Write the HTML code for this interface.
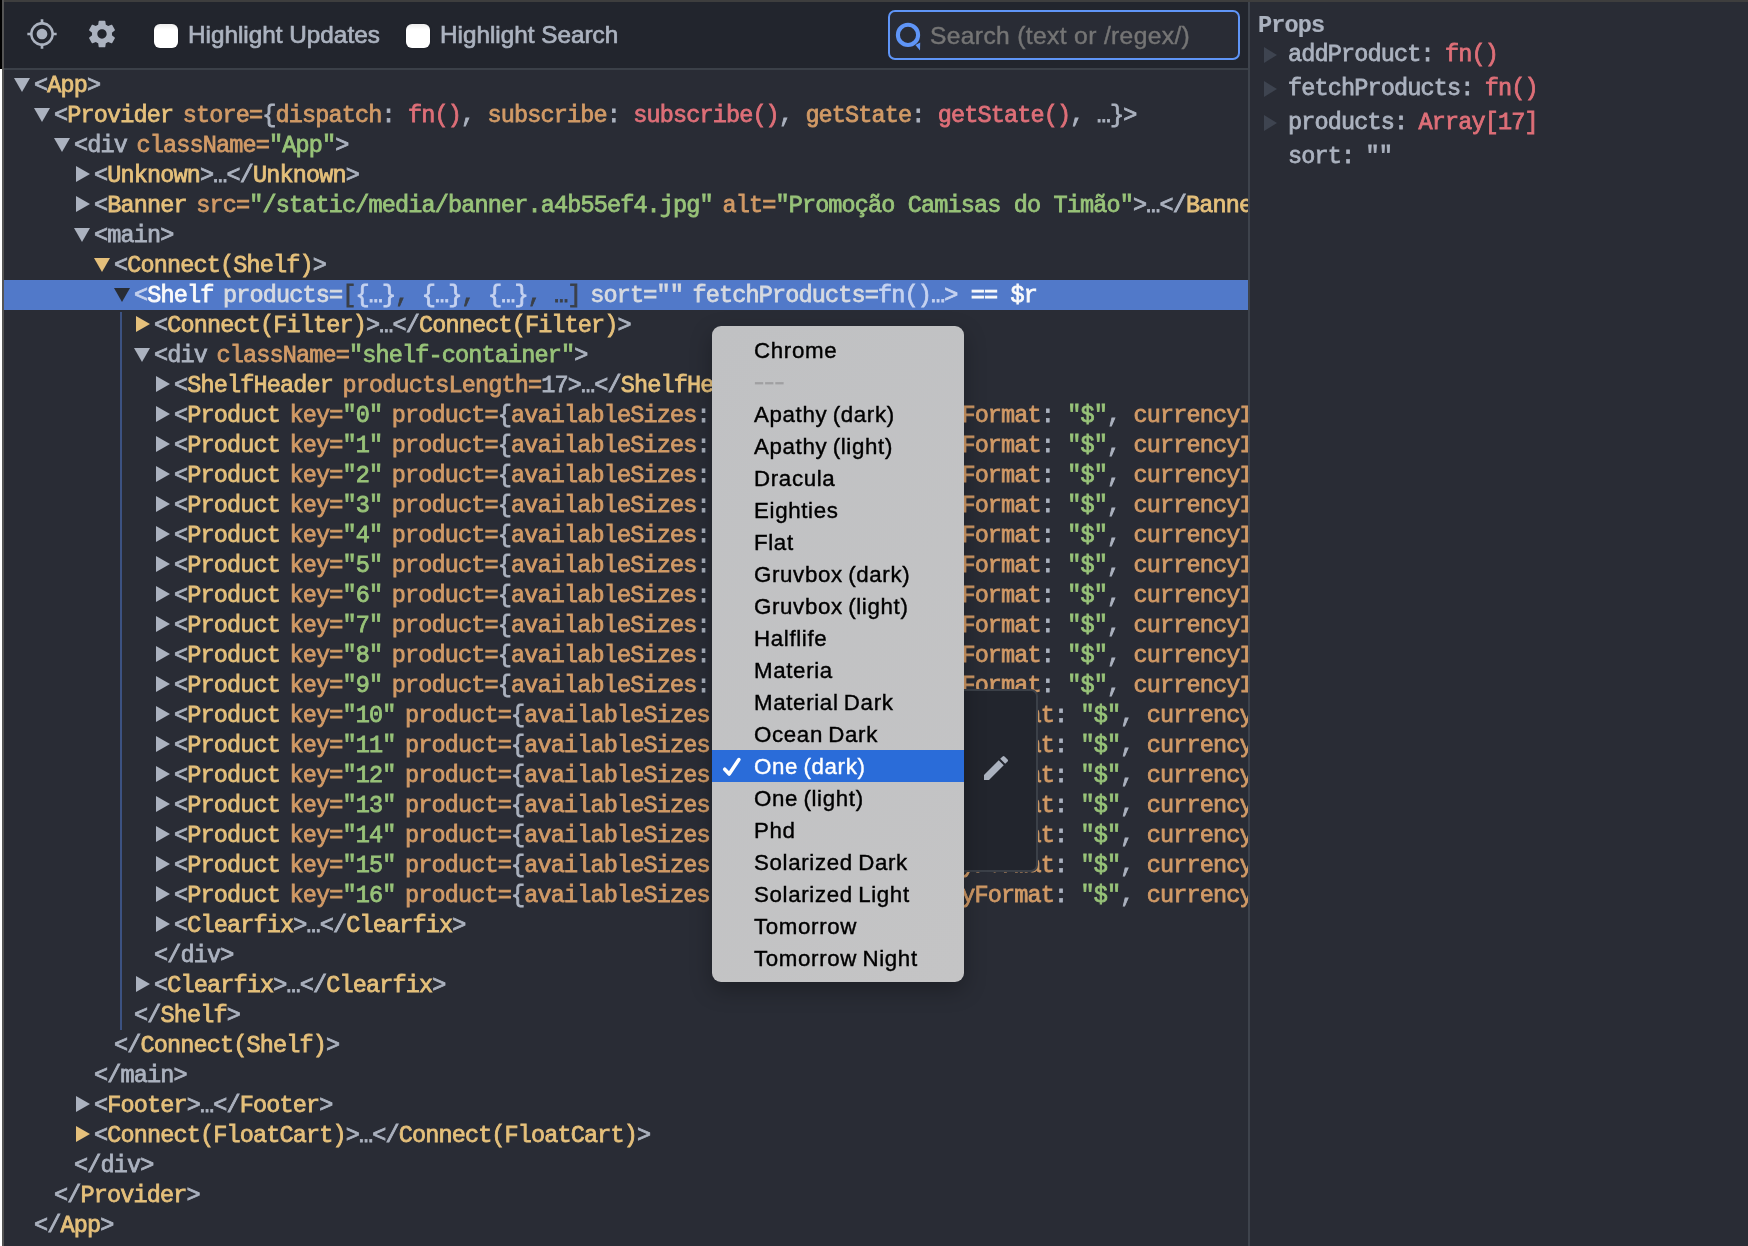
<!DOCTYPE html>
<html><head><meta charset="utf-8"><title>React DevTools</title>
<style>
*{box-sizing:border-box;margin:0;padding:0}
html,body{width:1748px;height:1246px;overflow:hidden;background:#292c35}
body{position:relative;font-family:"Liberation Mono",monospace;font-size:23.5px;letter-spacing:-0.857px;color:#abb2bf}
#lb{position:absolute;left:0;top:0;width:2px;height:69px;background:#000}
#lw{position:absolute;left:0;top:69px;width:2px;height:1177px;background:#fff}
#lg{position:absolute;left:2px;top:0;width:2px;height:1246px;background:#555}
#tg{position:absolute;left:4px;top:0;width:1744px;height:2px;background:#3e3e3e}
#tb{position:absolute;left:4px;top:2px;width:1244px;height:66px;background:#22252d}
#tbl{position:absolute;left:4px;top:68px;width:1244px;height:2px;background:#3b4048}
#vd{position:absolute;left:1248px;top:2px;width:2px;height:1244px;background:#3e434c}
#tree{position:absolute;left:0;top:0;width:1248px;height:1246px;overflow:hidden}
.row{position:absolute;left:4px;width:1244px;height:30px;line-height:31px;white-space:pre}
.row.sel{background:#5179c9}
.tx{position:absolute;top:0;margin-left:-4px;white-space:pre;-webkit-text-stroke:0.8px;will-change:transform}
.tx span{display:inline}
.b{color:#abb2bf}.n{color:#e5c07b}.h{color:#abb2bf}.a{color:#d19a66}.s{color:#98c379}.f{color:#de6f78}
.sp{letter-spacing:-4.557px}
.sb{color:#c3d0ee}.sn{color:#fafafa}.sa{color:#d7dae0}.sd{color:#3b4048}.sv{color:#c5d2f0}
.ar{position:absolute;margin-left:-4px;width:0;height:0;border-style:solid}
.ar.d{top:8px;border-width:14px 8px 0 8px;border-color:#abb2bf transparent transparent transparent}
.ar.r{top:6px;margin-left:-2px;border-width:8px 0 8px 14px;border-color:transparent transparent transparent #abb2bf}
.ar.d.y{border-top-color:#e5c07b}.ar.r.y{border-left-color:#e5c07b}
.ar.d.k{border-top-color:#282c34}
#guide{position:absolute;left:120px;top:312px;width:2px;height:718px;background:#3c5282}
.tbt{position:absolute;top:19.8px;letter-spacing:0;will-change:transform;-webkit-text-stroke:0.7px;font-family:"Liberation Sans",sans-serif;font-size:24.3px;line-height:30px;color:#abb2bf;white-space:pre}
.cb{position:absolute;top:24px;width:24px;height:24px;border-radius:6px;background:linear-gradient(#ececec,#fff 22%);box-shadow:0 0 2px 0 rgba(14,16,24,.4);filter:blur(0.5px)}
#search{position:absolute;left:888px;top:10px;width:352px;height:50px;border:2px solid #5f95f7;border-radius:7px;background:#292c35}
#search span{letter-spacing:0.36px;will-change:transform;-webkit-text-stroke:0.45px;position:absolute;left:40px;top:8.6px;font-family:"Liberation Sans",sans-serif;font-size:24.6px;line-height:30px;color:#757575;white-space:pre}
#panel{position:absolute;left:940px;top:689px;width:98px;height:183px;border:2px solid #3b4048;border-radius:7px;background:#22252d}
#menu{position:absolute;left:712px;top:326px;width:252px;height:656px;border-radius:9px;background:linear-gradient(135deg,#c0c1c3,#c4c4c5);box-shadow:0 8px 22px rgba(0,0,0,.28)}
.mi{letter-spacing:0.65px;word-spacing:-1.5px;-webkit-text-stroke:0.4px;position:absolute;left:712px;width:252px;height:32px;line-height:34px;padding-left:42px;font-family:"Liberation Sans",sans-serif;font-size:22.3px;color:#000;white-space:pre}
.mi.dis{color:#a3a3a3;letter-spacing:3px}
.mi.on{background:#2a6cd9;color:#fff}
#props{position:absolute;left:1250px;top:2px;width:498px;height:1244px;background:#292c35}
.ph{position:absolute;left:1258px;top:10.8px;line-height:30px;font-weight:bold;color:#abb2bf;will-change:transform;-webkit-text-stroke:0.2px}
.pr{position:absolute;left:1288px;line-height:30px;white-space:pre;will-change:transform;-webkit-text-stroke:0.8px}
.ps{letter-spacing:-2.757px}
.pa{position:absolute;left:1264px;width:0;height:0;border-style:solid;border-width:8px 0 8px 13px;border-color:transparent transparent transparent #3e4450}
</style></head><body>
<div id="tree">
<div class="row" style="top:70px"><i class="ar d g" style="left:14px"></i><span class="tx" style="left:34px"><span class="b">&lt;</span><span class="n">App</span><span class="b">&gt;</span></span></div>
<div class="row" style="top:100px"><i class="ar d g" style="left:34px"></i><span class="tx" style="left:54px"><span class="b">&lt;</span><span class="n">Provider</span><span class="sp"> </span><span class="a">store=</span><span class="b">{</span><span class="a">dispatch</span><span class="b">: </span><span class="f">fn()</span><span class="b">, </span><span class="a">subscribe</span><span class="b">: </span><span class="f">subscribe()</span><span class="b">, </span><span class="a">getState</span><span class="b">: </span><span class="f">getState()</span><span class="b">, …}&gt;</span></span></div>
<div class="row" style="top:130px"><i class="ar d g" style="left:54px"></i><span class="tx" style="left:74px"><span class="b">&lt;</span><span class="h">div</span><span class="sp"> </span><span class="a">className=</span><span class="s">"App"</span><span class="b">&gt;</span></span></div>
<div class="row" style="top:160px"><i class="ar r g" style="left:74px"></i><span class="tx" style="left:94px"><span class="b">&lt;</span><span class="n">Unknown</span><span class="b">&gt;…&lt;/</span><span class="n">Unknown</span><span class="b">&gt;</span></span></div>
<div class="row" style="top:190px"><i class="ar r g" style="left:74px"></i><span class="tx" style="left:94px"><span class="b">&lt;</span><span class="n">Banner</span><span class="sp"> </span><span class="a">src=</span><span class="s">"/static/media/banner.a4b55ef4.jpg"</span><span class="sp"> </span><span class="a">alt=</span><span class="s">"Promoção Camisas do Timão"</span><span class="b">&gt;…&lt;/</span><span class="n">Banner</span><span class="b">&gt;</span></span></div>
<div class="row" style="top:220px"><i class="ar d g" style="left:74px"></i><span class="tx" style="left:94px"><span class="b">&lt;</span><span class="h">main</span><span class="b">&gt;</span></span></div>
<div class="row" style="top:250px"><i class="ar d y" style="left:94px"></i><span class="tx" style="left:114px"><span class="b">&lt;</span><span class="n">Connect(Shelf)</span><span class="b">&gt;</span></span></div>
<div class="row sel" style="top:280px"><i class="ar d k" style="left:114px"></i><span class="tx" style="left:134px"><span class="sb">&lt;</span><span class="sn">Shelf</span><span class="sp"> </span><span class="sa">products=</span><span class="sd">[</span><span class="sv">{…}</span><span class="sd">, </span><span class="sv">{…}</span><span class="sd">, </span><span class="sv">{…}</span><span class="sd">, </span><span class="sd">…]</span><span class="sp"> </span><span class="sa">sort=""</span><span class="sp"> </span><span class="sa">fetchProducts=</span><span class="sv">fn()…&gt;</span><span class="sn"> == $r</span></span></div>
<div class="row" style="top:310px"><i class="ar r y" style="left:134px"></i><span class="tx" style="left:154px"><span class="b">&lt;</span><span class="n">Connect(Filter)</span><span class="b">&gt;…&lt;/</span><span class="n">Connect(Filter)</span><span class="b">&gt;</span></span></div>
<div class="row" style="top:340px"><i class="ar d g" style="left:134px"></i><span class="tx" style="left:154px"><span class="b">&lt;</span><span class="h">div</span><span class="sp"> </span><span class="a">className=</span><span class="s">"shelf-container"</span><span class="b">&gt;</span></span></div>
<div class="row" style="top:370px"><i class="ar r g" style="left:154px"></i><span class="tx" style="left:174px"><span class="b">&lt;</span><span class="n">ShelfHeader</span><span class="sp"> </span><span class="a">productsLength=</span><span class="b">17&gt;…&lt;/</span><span class="n">ShelfHeader</span><span class="b">&gt;</span></span></div>
<div class="row" style="top:400px"><i class="ar r g" style="left:154px"></i><span class="tx" style="left:174px"><span class="b">&lt;</span><span class="n">Product</span><span class="sp"> </span><span class="a">key=</span><span class="s">"0"</span><span class="sp"> </span><span class="a">product=</span><span class="b">{</span><span class="a">availableSizes</span><span class="b">: </span><span class="f">Array[2]</span><span class="b">, </span><span class="a">currencyFormat</span><span class="b">: </span><span class="s">"$"</span><span class="b">, </span><span class="a">currencyId</span><span class="b">: </span><span class="s">"BRL"</span><span class="b">, …}</span></span></div>
<div class="row" style="top:430px"><i class="ar r g" style="left:154px"></i><span class="tx" style="left:174px"><span class="b">&lt;</span><span class="n">Product</span><span class="sp"> </span><span class="a">key=</span><span class="s">"1"</span><span class="sp"> </span><span class="a">product=</span><span class="b">{</span><span class="a">availableSizes</span><span class="b">: </span><span class="f">Array[2]</span><span class="b">, </span><span class="a">currencyFormat</span><span class="b">: </span><span class="s">"$"</span><span class="b">, </span><span class="a">currencyId</span><span class="b">: </span><span class="s">"BRL"</span><span class="b">, …}</span></span></div>
<div class="row" style="top:460px"><i class="ar r g" style="left:154px"></i><span class="tx" style="left:174px"><span class="b">&lt;</span><span class="n">Product</span><span class="sp"> </span><span class="a">key=</span><span class="s">"2"</span><span class="sp"> </span><span class="a">product=</span><span class="b">{</span><span class="a">availableSizes</span><span class="b">: </span><span class="f">Array[2]</span><span class="b">, </span><span class="a">currencyFormat</span><span class="b">: </span><span class="s">"$"</span><span class="b">, </span><span class="a">currencyId</span><span class="b">: </span><span class="s">"BRL"</span><span class="b">, …}</span></span></div>
<div class="row" style="top:490px"><i class="ar r g" style="left:154px"></i><span class="tx" style="left:174px"><span class="b">&lt;</span><span class="n">Product</span><span class="sp"> </span><span class="a">key=</span><span class="s">"3"</span><span class="sp"> </span><span class="a">product=</span><span class="b">{</span><span class="a">availableSizes</span><span class="b">: </span><span class="f">Array[2]</span><span class="b">, </span><span class="a">currencyFormat</span><span class="b">: </span><span class="s">"$"</span><span class="b">, </span><span class="a">currencyId</span><span class="b">: </span><span class="s">"BRL"</span><span class="b">, …}</span></span></div>
<div class="row" style="top:520px"><i class="ar r g" style="left:154px"></i><span class="tx" style="left:174px"><span class="b">&lt;</span><span class="n">Product</span><span class="sp"> </span><span class="a">key=</span><span class="s">"4"</span><span class="sp"> </span><span class="a">product=</span><span class="b">{</span><span class="a">availableSizes</span><span class="b">: </span><span class="f">Array[2]</span><span class="b">, </span><span class="a">currencyFormat</span><span class="b">: </span><span class="s">"$"</span><span class="b">, </span><span class="a">currencyId</span><span class="b">: </span><span class="s">"BRL"</span><span class="b">, …}</span></span></div>
<div class="row" style="top:550px"><i class="ar r g" style="left:154px"></i><span class="tx" style="left:174px"><span class="b">&lt;</span><span class="n">Product</span><span class="sp"> </span><span class="a">key=</span><span class="s">"5"</span><span class="sp"> </span><span class="a">product=</span><span class="b">{</span><span class="a">availableSizes</span><span class="b">: </span><span class="f">Array[2]</span><span class="b">, </span><span class="a">currencyFormat</span><span class="b">: </span><span class="s">"$"</span><span class="b">, </span><span class="a">currencyId</span><span class="b">: </span><span class="s">"BRL"</span><span class="b">, …}</span></span></div>
<div class="row" style="top:580px"><i class="ar r g" style="left:154px"></i><span class="tx" style="left:174px"><span class="b">&lt;</span><span class="n">Product</span><span class="sp"> </span><span class="a">key=</span><span class="s">"6"</span><span class="sp"> </span><span class="a">product=</span><span class="b">{</span><span class="a">availableSizes</span><span class="b">: </span><span class="f">Array[2]</span><span class="b">, </span><span class="a">currencyFormat</span><span class="b">: </span><span class="s">"$"</span><span class="b">, </span><span class="a">currencyId</span><span class="b">: </span><span class="s">"BRL"</span><span class="b">, …}</span></span></div>
<div class="row" style="top:610px"><i class="ar r g" style="left:154px"></i><span class="tx" style="left:174px"><span class="b">&lt;</span><span class="n">Product</span><span class="sp"> </span><span class="a">key=</span><span class="s">"7"</span><span class="sp"> </span><span class="a">product=</span><span class="b">{</span><span class="a">availableSizes</span><span class="b">: </span><span class="f">Array[2]</span><span class="b">, </span><span class="a">currencyFormat</span><span class="b">: </span><span class="s">"$"</span><span class="b">, </span><span class="a">currencyId</span><span class="b">: </span><span class="s">"BRL"</span><span class="b">, …}</span></span></div>
<div class="row" style="top:640px"><i class="ar r g" style="left:154px"></i><span class="tx" style="left:174px"><span class="b">&lt;</span><span class="n">Product</span><span class="sp"> </span><span class="a">key=</span><span class="s">"8"</span><span class="sp"> </span><span class="a">product=</span><span class="b">{</span><span class="a">availableSizes</span><span class="b">: </span><span class="f">Array[2]</span><span class="b">, </span><span class="a">currencyFormat</span><span class="b">: </span><span class="s">"$"</span><span class="b">, </span><span class="a">currencyId</span><span class="b">: </span><span class="s">"BRL"</span><span class="b">, …}</span></span></div>
<div class="row" style="top:670px"><i class="ar r g" style="left:154px"></i><span class="tx" style="left:174px"><span class="b">&lt;</span><span class="n">Product</span><span class="sp"> </span><span class="a">key=</span><span class="s">"9"</span><span class="sp"> </span><span class="a">product=</span><span class="b">{</span><span class="a">availableSizes</span><span class="b">: </span><span class="f">Array[2]</span><span class="b">, </span><span class="a">currencyFormat</span><span class="b">: </span><span class="s">"$"</span><span class="b">, </span><span class="a">currencyId</span><span class="b">: </span><span class="s">"BRL"</span><span class="b">, …}</span></span></div>
<div class="row" style="top:700px"><i class="ar r g" style="left:154px"></i><span class="tx" style="left:174px"><span class="b">&lt;</span><span class="n">Product</span><span class="sp"> </span><span class="a">key=</span><span class="s">"10"</span><span class="sp"> </span><span class="a">product=</span><span class="b">{</span><span class="a">availableSizes</span><span class="b">: </span><span class="f">Array[2]</span><span class="b">, </span><span class="a">currencyFormat</span><span class="b">: </span><span class="s">"$"</span><span class="b">, </span><span class="a">currencyId</span><span class="b">: </span><span class="s">"BRL"</span><span class="b">, …}</span></span></div>
<div class="row" style="top:730px"><i class="ar r g" style="left:154px"></i><span class="tx" style="left:174px"><span class="b">&lt;</span><span class="n">Product</span><span class="sp"> </span><span class="a">key=</span><span class="s">"11"</span><span class="sp"> </span><span class="a">product=</span><span class="b">{</span><span class="a">availableSizes</span><span class="b">: </span><span class="f">Array[2]</span><span class="b">, </span><span class="a">currencyFormat</span><span class="b">: </span><span class="s">"$"</span><span class="b">, </span><span class="a">currencyId</span><span class="b">: </span><span class="s">"BRL"</span><span class="b">, …}</span></span></div>
<div class="row" style="top:760px"><i class="ar r g" style="left:154px"></i><span class="tx" style="left:174px"><span class="b">&lt;</span><span class="n">Product</span><span class="sp"> </span><span class="a">key=</span><span class="s">"12"</span><span class="sp"> </span><span class="a">product=</span><span class="b">{</span><span class="a">availableSizes</span><span class="b">: </span><span class="f">Array[2]</span><span class="b">, </span><span class="a">currencyFormat</span><span class="b">: </span><span class="s">"$"</span><span class="b">, </span><span class="a">currencyId</span><span class="b">: </span><span class="s">"BRL"</span><span class="b">, …}</span></span></div>
<div class="row" style="top:790px"><i class="ar r g" style="left:154px"></i><span class="tx" style="left:174px"><span class="b">&lt;</span><span class="n">Product</span><span class="sp"> </span><span class="a">key=</span><span class="s">"13"</span><span class="sp"> </span><span class="a">product=</span><span class="b">{</span><span class="a">availableSizes</span><span class="b">: </span><span class="f">Array[2]</span><span class="b">, </span><span class="a">currencyFormat</span><span class="b">: </span><span class="s">"$"</span><span class="b">, </span><span class="a">currencyId</span><span class="b">: </span><span class="s">"BRL"</span><span class="b">, …}</span></span></div>
<div class="row" style="top:820px"><i class="ar r g" style="left:154px"></i><span class="tx" style="left:174px"><span class="b">&lt;</span><span class="n">Product</span><span class="sp"> </span><span class="a">key=</span><span class="s">"14"</span><span class="sp"> </span><span class="a">product=</span><span class="b">{</span><span class="a">availableSizes</span><span class="b">: </span><span class="f">Array[2]</span><span class="b">, </span><span class="a">currencyFormat</span><span class="b">: </span><span class="s">"$"</span><span class="b">, </span><span class="a">currencyId</span><span class="b">: </span><span class="s">"BRL"</span><span class="b">, …}</span></span></div>
<div class="row" style="top:850px"><i class="ar r g" style="left:154px"></i><span class="tx" style="left:174px"><span class="b">&lt;</span><span class="n">Product</span><span class="sp"> </span><span class="a">key=</span><span class="s">"15"</span><span class="sp"> </span><span class="a">product=</span><span class="b">{</span><span class="a">availableSizes</span><span class="b">: </span><span class="f">Array[2]</span><span class="b">, </span><span class="a">currencyFormat</span><span class="b">: </span><span class="s">"$"</span><span class="b">, </span><span class="a">currencyId</span><span class="b">: </span><span class="s">"BRL"</span><span class="b">, …}</span></span></div>
<div class="row" style="top:880px"><i class="ar r g" style="left:154px"></i><span class="tx" style="left:174px"><span class="b">&lt;</span><span class="n">Product</span><span class="sp"> </span><span class="a">key=</span><span class="s">"16"</span><span class="sp"> </span><span class="a">product=</span><span class="b">{</span><span class="a">availableSizes</span><span class="b">: </span><span class="f">Array[2]</span><span class="b">, </span><span class="a">currencyFormat</span><span class="b">: </span><span class="s">"$"</span><span class="b">, </span><span class="a">currencyId</span><span class="b">: </span><span class="s">"BRL"</span><span class="b">, …}</span></span></div>
<div class="row" style="top:910px"><i class="ar r g" style="left:154px"></i><span class="tx" style="left:174px"><span class="b">&lt;</span><span class="n">Clearfix</span><span class="b">&gt;…&lt;/</span><span class="n">Clearfix</span><span class="b">&gt;</span></span></div>
<div class="row" style="top:940px"><span class="tx" style="left:154px"><span class="b">&lt;/</span><span class="h">div</span><span class="b">&gt;</span></span></div>
<div class="row" style="top:970px"><i class="ar r g" style="left:134px"></i><span class="tx" style="left:154px"><span class="b">&lt;</span><span class="n">Clearfix</span><span class="b">&gt;…&lt;/</span><span class="n">Clearfix</span><span class="b">&gt;</span></span></div>
<div class="row" style="top:1000px"><span class="tx" style="left:134px"><span class="b">&lt;/</span><span class="n">Shelf</span><span class="b">&gt;</span></span></div>
<div class="row" style="top:1030px"><span class="tx" style="left:114px"><span class="b">&lt;/</span><span class="n">Connect(Shelf)</span><span class="b">&gt;</span></span></div>
<div class="row" style="top:1060px"><span class="tx" style="left:94px"><span class="b">&lt;/</span><span class="h">main</span><span class="b">&gt;</span></span></div>
<div class="row" style="top:1090px"><i class="ar r g" style="left:74px"></i><span class="tx" style="left:94px"><span class="b">&lt;</span><span class="n">Footer</span><span class="b">&gt;…&lt;/</span><span class="n">Footer</span><span class="b">&gt;</span></span></div>
<div class="row" style="top:1120px"><i class="ar r y" style="left:74px"></i><span class="tx" style="left:94px"><span class="b">&lt;</span><span class="n">Connect(FloatCart)</span><span class="b">&gt;…&lt;/</span><span class="n">Connect(FloatCart)</span><span class="b">&gt;</span></span></div>
<div class="row" style="top:1150px"><span class="tx" style="left:74px"><span class="b">&lt;/</span><span class="h">div</span><span class="b">&gt;</span></span></div>
<div class="row" style="top:1180px"><span class="tx" style="left:54px"><span class="b">&lt;/</span><span class="n">Provider</span><span class="b">&gt;</span></span></div>
<div class="row" style="top:1210px"><span class="tx" style="left:34px"><span class="b">&lt;/</span><span class="n">App</span><span class="b">&gt;</span></span></div>
<div id="guide"></div>
</div>
<div id="lb"></div><div id="lw"></div><div id="lg"></div><div id="tg"></div>
<div id="tb"></div><div id="tbl"></div>
<div id="vd"></div>
<div id="props"></div>
<div class="ph">Props</div>
<i class="pa" style="top:47px"></i><div class="pr" style="top:40.2px"><span class="b">addProduct:</span><span class="ps"> </span><span class="f">fn()</span></div>
<i class="pa" style="top:81px"></i><div class="pr" style="top:74.2px"><span class="b">fetchProducts:</span><span class="ps"> </span><span class="f">fn()</span></div>
<i class="pa" style="top:115px"></i><div class="pr" style="top:108.2px"><span class="b">products:</span><span class="ps"> </span><span class="f">Array[17]</span></div>
<div class="pr" style="top:142.2px"><span class="b">sort:</span><span class="ps"> </span><span class="b">""</span></div>

<svg id="ic1" style="position:absolute;left:26px;top:18px" width="32" height="32" viewBox="0 0 24 24"><path fill="#abb2bf" d="M12 8c-2.21 0-4 1.79-4 4s1.790 4 4 4 4-1.790 4-4-1.790-4-4-4zm8.940 3A8.994 8.994 0 0 0 13 3.060V1h-2v2.060A8.994 8.994 0 0 0 3.060 11H1v2h2.060A8.994 8.994 0 0 0 11 20.940V23h2v-2.060A8.994 8.994 0 0 0 20.940 13H23v-2h-2.060zM12 19c-3.870 0-7-3.130-7-7s3.130-7 7-7 7 3.130 7 7-3.130 7-7 7z"/></svg>
<svg id="ic2" style="position:absolute;left:86px;top:18px" width="32" height="32" viewBox="0 0 24 24"><path fill="#abb2bf" d="M19.430 12.980c.040-.320.070-.640.070-.980s-.030-.660-.070-.980l2.110-1.650c.190-.150.240-.420.120-.640l-2-3.460c-.120-.220-.390-.3-.61-.22l-2.490 1c-.52-.4-1.080-.730-1.690-.980l-.380-2.650C14.460 2.180 14.250 2 14 2h-4c-.25 0-.46.180-.49.420l-.38 2.650c-.61.250-1.170.590-1.690.980l-2.490-1c-.23-.090-.49 0-.61.220l-2 3.460c-.13.220-.07.490.12.640l2.110 1.650c-.040.320-.07.650-.07.980s.03.660.07.980l-2.110 1.650c-.19.150-.24.420-.12.640l2 3.460c.12.220.39.300.61.220l2.490-1c.52.400 1.080.73 1.690.98l.38 2.650c.03.240.24.420.49.420h4c.25 0 .46-.18.490-.42l.38-2.650c.61-.25 1.170-.59 1.690-.98l2.490 1c.23.090.49 0 .61-.22l2-3.460c.12-.22.070-.49-.12-.64l-2.110-1.650zM12 15.500c-1.930 0-3.500-1.570-3.500-3.500s1.570-3.500 3.500-3.500 3.500 1.570 3.500 3.500-1.570 3.500-3.500 3.500z"/></svg>
<div class="cb" style="left:154px"></div><div class="tbt" style="left:188px">Highlight Updates</div>
<div class="cb" style="left:406px"></div><div class="tbt" style="left:440px">Highlight Search</div>
<div id="search"><svg style="position:absolute;left:5px;top:9px" width="30" height="32" viewBox="0 0 30 32"><circle cx="13" cy="13.9" r="10.1" fill="none" stroke="#5f95f7" stroke-width="4.1"/><path d="M20.4 23.9 L25.2 21.5 L25 29.4 Z" fill="#5f95f7"/></svg><span>Search (text or /regex/)</span></div>

<div id="panel"><svg style="position:absolute;left:38.3px;top:61.2px" width="32" height="32" viewBox="0 0 24 24"><path fill="#abb2bf" d="M3 17.250V21h3.750L17.810 9.940l-3.750-3.750L3 17.250zM20.710 7.040a.996.996 0 0 0 0-1.410l-2.340-2.340a.996.996 0 0 0-1.410 0l-1.830 1.830 3.750 3.750 1.830-1.830z"/></svg></div>
<div id="menu"></div>
<div class="mi" style="top:334px">Chrome</div>
<svg style="position:absolute;left:754px;top:381px" width="32" height="4" viewBox="0 0 32 4"><rect x="0.9" y="1.1" width="8.3" height="2.3" fill="#a0a0a2"/><rect x="11.1" y="1.1" width="8.3" height="2.3" fill="#a0a0a2"/><rect x="21.3" y="1.1" width="8.3" height="2.3" fill="#a0a0a2"/></svg>
<div class="mi" style="top:398px">Apathy (dark)</div>
<div class="mi" style="top:430px">Apathy (light)</div>
<div class="mi" style="top:462px">Dracula</div>
<div class="mi" style="top:494px">Eighties</div>
<div class="mi" style="top:526px">Flat</div>
<div class="mi" style="top:558px">Gruvbox (dark)</div>
<div class="mi" style="top:590px">Gruvbox (light)</div>
<div class="mi" style="top:622px">Halflife</div>
<div class="mi" style="top:654px">Materia</div>
<div class="mi" style="top:686px">Material Dark</div>
<div class="mi" style="top:718px">Ocean Dark</div>
<div class="mi on" style="top:750px">One (dark)</div>
<div class="mi" style="top:782px">One (light)</div>
<div class="mi" style="top:814px">Phd</div>
<div class="mi" style="top:846px">Solarized Dark</div>
<div class="mi" style="top:878px">Solarized Light</div>
<div class="mi" style="top:910px">Tomorrow</div>
<div class="mi" style="top:942px">Tomorrow Night</div>
<svg style="position:absolute;left:722px;top:755px" width="22" height="24" viewBox="0 0 22 24"><path d="M2.7 14.2 L7.2 19 L16.9 4.6" fill="none" stroke="#fff" stroke-width="3.6" stroke-linecap="round" stroke-linejoin="round"/></svg>
</body></html>
